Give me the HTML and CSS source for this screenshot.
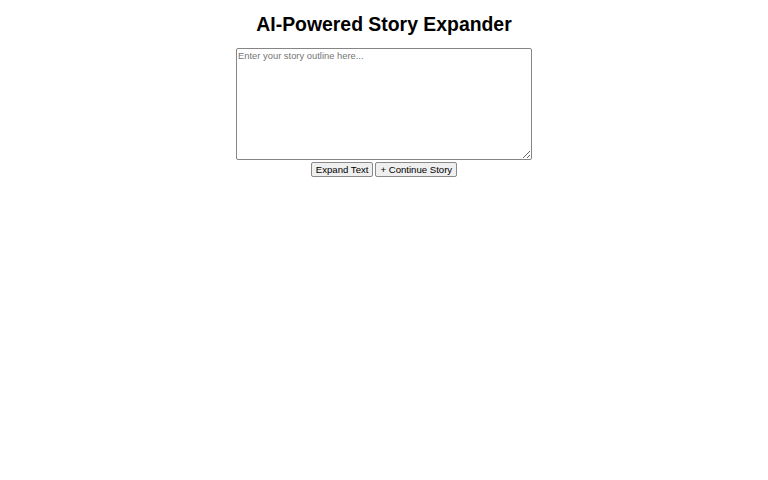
FILE: index.html
```html
<!DOCTYPE html>
<html>
<head>
<meta charset="utf-8">
<link rel="stylesheet" href="styles.css">
</head>
<body>
<main class="page">
  <h1 class="title">AI-Powered Story Expander</h1>
  <textarea class="outline" placeholder="Enter your story outline here..."></textarea>
  <div class="actions">
    <button class="btn">Expand Text</button>
    <button class="btn">+ Continue Story</button>
  </div>
</main>
</body>
</html>
```
FILE: styles.css
```css
html, body {
  margin: 0;
  padding: 0;
  background: #fff;
}
body {
  font-family: "Liberation Sans", Arial, sans-serif;
  color: #000;
}
.page {
  display: flex;
  flex-direction: column;
  align-items: center;
  padding-top: 12px;
}
.title {
  margin: 0 0 12px;
  font-size: 19.4px;
  font-weight: bold;
  line-height: 24px;
}
.outline {
  box-sizing: border-box;
  width: 296px;
  height: 112px;
  margin: 0;
  padding: 1px;
  border: 1px solid #858585;
  border-radius: 2px;
  font-family: "Liberation Sans", Arial, sans-serif;
  font-size: 9.4px;
  line-height: 11px;
  resize: vertical;
}
.outline::placeholder {
  color: #757575;
}
.actions {
  display: flex;
  gap: 2px;
  margin-top: 2px;
}
.btn {
  box-sizing: border-box;
  height: 15px;
  padding: 0 4px;
  border: 1px solid #8a8a8a;
  border-radius: 2px;
  background: #efefef;
  font-family: "Liberation Sans", Arial, sans-serif;
  font-size: 9.6px;
  line-height: 12px;
  color: #000;
}
```
